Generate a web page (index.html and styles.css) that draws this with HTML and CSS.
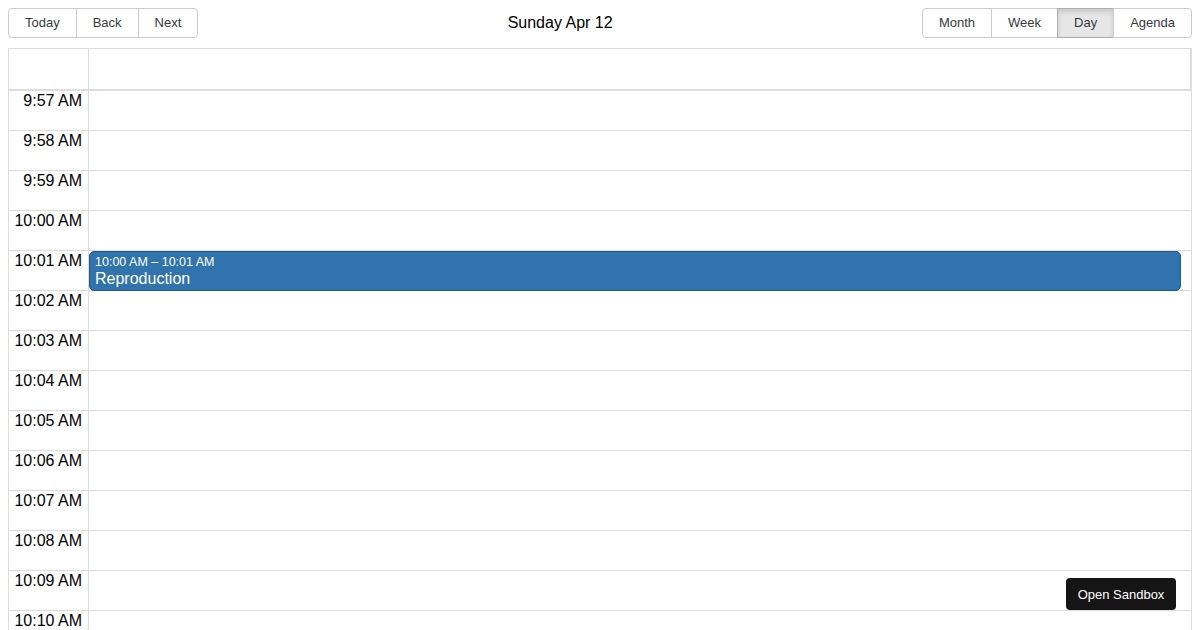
FILE: index.html
```html
<!DOCTYPE html>
<html lang="en">
<head>
  <meta charset="UTF-8">
  <title>Calendar</title>
  <link rel="stylesheet" href="styles.css">
</head>
<body>
  <div class="calendar">
    <div class="toolbar">
      <span class="btn-group">
        <button>Today</button>
        <button>Back</button>
        <button>Next</button>
      </span>
      <span class="toolbar-label">Sunday Apr 12</span>
      <span class="btn-group">
        <button>Month</button>
        <button>Week</button>
        <button class="active">Day</button>
        <button>Agenda</button>
      </span>
    </div>

    <div class="time-view">
      <div class="time-header">
        <div class="header-gutter"></div>
        <div class="header-day"></div>
      </div>
      <div class="time-content">
        <div class="gutter-col">
          <div class="slot">9:57 AM</div>
          <div class="slot">9:58 AM</div>
          <div class="slot">9:59 AM</div>
          <div class="slot">10:00 AM</div>
          <div class="slot">10:01 AM</div>
          <div class="slot">10:02 AM</div>
          <div class="slot">10:03 AM</div>
          <div class="slot">10:04 AM</div>
          <div class="slot">10:05 AM</div>
          <div class="slot">10:06 AM</div>
          <div class="slot">10:07 AM</div>
          <div class="slot">10:08 AM</div>
          <div class="slot">10:09 AM</div>
          <div class="slot">10:10 AM</div>
          <div class="slot">10:11 AM</div>
        </div>
        <div class="day-col">
          <div class="slot"></div>
          <div class="slot"></div>
          <div class="slot"></div>
          <div class="slot"></div>
          <div class="slot"></div>
          <div class="slot"></div>
          <div class="slot"></div>
          <div class="slot"></div>
          <div class="slot"></div>
          <div class="slot"></div>
          <div class="slot"></div>
          <div class="slot"></div>
          <div class="slot"></div>
          <div class="slot"></div>
          <div class="slot"></div>
          <!-- event lies over the slots -->
          <div class="event">
            <div class="event-label">10:00 AM – 10:01 AM</div>
            <div class="event-title">Reproduction</div>
          </div>
        </div>
      </div>
    </div>
  </div>

  <button class="sandbox-btn">Open Sandbox</button>
</body>
</html>
```

FILE: styles.css
```css
html,
body {
  overflow: hidden;
}
body {
  margin: 8px;
  font-family: "Liberation Sans", Arial, Helvetica, sans-serif;
  color: #000;
}
.calendar {
  height: 660px;
  display: flex;
  flex-direction: column;
}
.toolbar {
  display: flex;
  align-items: center;
  justify-content: center;
  margin-bottom: 10px;
  font-size: 16px;
}
.toolbar-label {
  flex-grow: 1;
  padding: 0 10px;
  text-align: center;
}
.btn-group {
  display: inline-flex;
  white-space: nowrap;
}
.btn-group button {
  font-family: "Liberation Sans", Arial, Helvetica, sans-serif;
  font-size: 13px;
  color: #373a3c;
  background: none;
  border: 1px solid #ccc;
  padding: 6px 16px;
  margin: 0;
  line-height: 16px;
  border-radius: 0;
}
.btn-group button + button {
  margin-left: -1px;
}
.btn-group button:first-child {
  border-radius: 4px 0 0 4px;
}
.btn-group button:last-child {
  border-radius: 0 4px 4px 0;
}
.btn-group button.active {
  background-color: #e6e6e6;
  border-color: #adadad;
  box-shadow: inset 0 3px 5px rgba(0, 0, 0, 0.125);
}
.time-view {
  flex: 1;
  display: flex;
  flex-direction: column;
  border: 1px solid #ddd;
  min-height: 0;
}
.time-header {
  display: flex;
  height: 40px;
  border-right: 1px solid #ddd;
}
.header-gutter {
  width: 79px;
}
.header-day {
  flex: 1;
  border-left: 1px solid #ddd;
}
.time-content {
  flex: 1;
  display: flex;
  border-top: 2px solid #ddd;
  overflow: hidden;
}
.gutter-col {
  width: 79px;
}
.slot {
  height: 39px;
  border-bottom: 1px solid #ddd;
}
.gutter-col .slot {
  padding: 0 6px 0 5px;
  text-align: right;
  font-size: 16px;
  line-height: 19px;
}
.day-col {
  flex: 1;
  position: relative;
  border-left: 1px solid #ddd;
}
.event {
  position: absolute;
  top: 160px;
  left: 0;
  right: 10px;
  height: 40px;
  box-sizing: border-box;
  padding: 2px 5px;
  background-color: #3174ad;
  border: 1px solid #265985;
  border-radius: 5px;
  color: #fff;
  overflow: hidden;
}
.event-label {
  font-size: 12.5px;
  line-height: 15px;
  margin-top: 1px;
}
.event-title {
  font-size: 16px;
  line-height: 17px;
}
.sandbox-btn {
  position: fixed;
  right: 24px;
  bottom: 20px;
  width: 110px;
  height: 32px;
  background: #151515;
  color: #fff;
  border: none;
  border-radius: 4px;
  font-family: "Liberation Sans", Arial, Helvetica, sans-serif;
  font-size: 13px;
}
```
